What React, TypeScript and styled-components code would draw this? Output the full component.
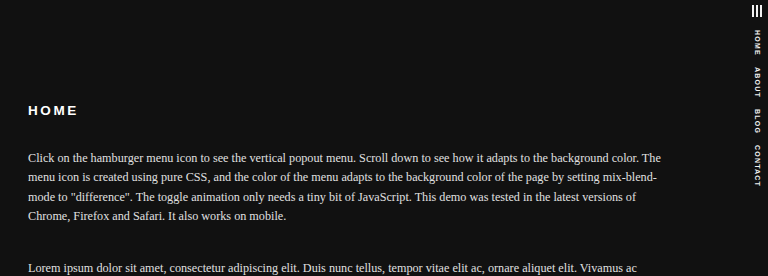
import styled, { createGlobalStyle } from 'styled-components'

const GlobalStyle = createGlobalStyle`
  html, body {
    margin: 0;
    padding: 0;
    background: #111111;
  }
`

const navItems = ['Home', 'About', 'Blog', 'Contact']

const intro = [
  'Click on the hamburger menu icon to see the vertical popout menu. Scroll down to see how it adapts to the background color. The',
  'menu icon is created using pure CSS, and the color of the menu adapts to the background color of the page by setting mix-blend-',
  'mode to "difference". The toggle animation only needs a tiny bit of JavaScript. This demo was tested in the latest versions of',
  'Chrome, Firefox and Safari. It also works on mobile.'
]

const App = () => {
  return (
    <>
      <GlobalStyle />
      <Page>
        <Main>
          <Heading>Home</Heading>
          <Text>
            {intro.map(line => (
              <Line key={line}>{line}</Line>
            ))}
          </Text>
          <Text>
            <Line>
              Lorem ipsum dolor sit amet, consectetur adipiscing elit. Duis
              nunc tellus, tempor vitae elit ac, ornare aliquet elit. Vivamus ac
            </Line>
          </Text>
        </Main>
        <Sidebar>
          <Burger aria-label="Menu">
            <Bar />
            <Bar />
            <Bar />
          </Burger>
          <Nav>
            {navItems.map(item => (
              <NavLink key={item} href="#">
                {item}
              </NavLink>
            ))}
          </Nav>
        </Sidebar>
      </Page>
    </>
  )
}

export default App

const Page = styled.div`
  display: flex;
  height: 276px;
  background: #111111;
  overflow: hidden;
`

const Main = styled.main`
  flex: 1;
  padding: 103px 0 0 28px;
`

const Heading = styled.h2`
  margin: 0 0 30px;
  font-family: 'Liberation Sans', Arial, sans-serif;
  font-weight: 700;
  font-size: 13.5px;
  line-height: 16px;
  letter-spacing: 2.6px;
  text-transform: uppercase;
  color: #ffffff;
`

const Text = styled.p`
  margin: 0 0 32px;
  font-family: 'Liberation Serif', 'Times New Roman', serif;
  font-size: 12.2px;
  line-height: 19.4px;
  color: #e0e0e0;
`

const Line = styled.span`
  display: block;
  white-space: nowrap;
`

const Sidebar = styled.aside`
  width: 22px;
  flex-shrink: 0;
  display: flex;
  flex-direction: column;
  align-items: center;
  padding-top: 5px;
`

const Burger = styled.button`
  display: flex;
  gap: 1.6px;
  padding: 0;
  border: 0;
  background: none;
  cursor: pointer;
`

const Bar = styled.span`
  display: block;
  width: 2px;
  height: 12px;
  background: #f2f2f2;
`

const Nav = styled.nav`
  display: flex;
  flex-direction: column;
  align-items: center;
  gap: 11px;
  margin-top: 13px;
`

const NavLink = styled.a`
  writing-mode: vertical-rl;
  font-family: 'Liberation Sans', Arial, sans-serif;
  font-weight: 700;
  font-size: 7px;
  line-height: 8px;
  letter-spacing: 1.2px;
  text-transform: uppercase;
  text-decoration: none;
  color: #f2f2f2;
`
